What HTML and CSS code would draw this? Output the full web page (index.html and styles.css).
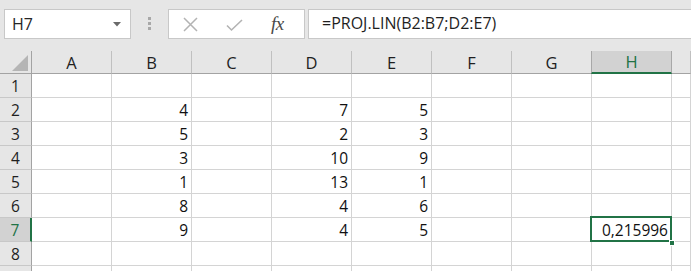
FILE: index.html
```html
<!DOCTYPE html>
<html>
<head>
<meta charset="utf-8">
<link rel="stylesheet" href="styles.css">
</head>
<body>
<div class="toolbar">
  <div class="namebox">
    <span class="nb-text">H7</span>
    <svg class="nb-arrow" width="8" height="5" viewBox="0 0 8 5"><path d="M0 0H8L4 4.5Z" fill="#6a6a6a"/></svg>
  </div>
  <div class="grip"><i></i><i></i><i></i></div>
  <div class="fbtns">
    <svg class="ic-x" width="15" height="15" viewBox="0 0 15 15"><path d="M1 1L14 14M14 1L1 14" stroke="#b3b3b3" stroke-width="1.5" fill="none"/></svg>
    <svg class="ic-check" width="17" height="13" viewBox="0 0 17 13"><path d="M1 6.5L5.5 11L16 1" stroke="#b3b3b3" stroke-width="1.6" fill="none"/></svg>
    <span class="fx">fx</span>
  </div>
  <div class="finput">=PROJ.LIN(B2:B7;D2:E7)</div>
</div>
<div class="sheet">
  <div class="row head">
    <div class="corner"><svg width="17" height="17" viewBox="0 0 17 17"><path d="M16 0V16H0Z" fill="#b5b5b5"/></svg></div>
    <div class="ch">A</div><div class="ch">B</div><div class="ch">C</div><div class="ch">D</div><div class="ch">E</div><div class="ch">F</div><div class="ch">G</div><div class="ch sel">H</div><div class="ch"></div>
  </div>
  <div class="row">
    <div class="rh">1</div><div class="c"></div><div class="c"></div><div class="c"></div><div class="c"></div><div class="c"></div><div class="c"></div><div class="c"></div><div class="c"></div><div class="c"></div>
  </div>
  <div class="row">
    <div class="rh">2</div><div class="c"></div><div class="c">4</div><div class="c"></div><div class="c">7</div><div class="c">5</div><div class="c"></div><div class="c"></div><div class="c"></div><div class="c"></div>
  </div>
  <div class="row">
    <div class="rh">3</div><div class="c"></div><div class="c">5</div><div class="c"></div><div class="c">2</div><div class="c">3</div><div class="c"></div><div class="c"></div><div class="c"></div><div class="c"></div>
  </div>
  <div class="row">
    <div class="rh">4</div><div class="c"></div><div class="c">3</div><div class="c"></div><div class="c">10</div><div class="c">9</div><div class="c"></div><div class="c"></div><div class="c"></div><div class="c"></div>
  </div>
  <div class="row">
    <div class="rh">5</div><div class="c"></div><div class="c">1</div><div class="c"></div><div class="c">13</div><div class="c">1</div><div class="c"></div><div class="c"></div><div class="c"></div><div class="c"></div>
  </div>
  <div class="row">
    <div class="rh">6</div><div class="c"></div><div class="c">8</div><div class="c"></div><div class="c">4</div><div class="c">6</div><div class="c"></div><div class="c"></div><div class="c"></div><div class="c"></div>
  </div>
  <div class="row">
    <div class="rh sel">7</div><div class="c"></div><div class="c">9</div><div class="c"></div><div class="c">4</div><div class="c">5</div><div class="c"></div><div class="c"></div><div class="c active">0,215996<span class="handle"></span></div><div class="c"></div>
  </div>
  <div class="row">
    <div class="rh">8</div><div class="c"></div><div class="c"></div><div class="c"></div><div class="c"></div><div class="c"></div><div class="c"></div><div class="c"></div><div class="c"></div><div class="c"></div>
  </div>
  <div class="row">
    <div class="rh"></div><div class="c"></div><div class="c"></div><div class="c"></div><div class="c"></div><div class="c"></div><div class="c"></div><div class="c"></div><div class="c"></div><div class="c"></div>
  </div>
</div>
</body>
</html>
```

FILE: styles.css
```css
* { box-sizing: border-box; }
html, body { margin: 0; padding: 0; }
body {
  width: 691px;
  height: 271px;
  overflow: hidden;
  background: #e6e6e6;
  font-family: "Open Sans", "Noto Sans", sans-serif;
  color: #1f1f1f;
}
.toolbar {
  height: 51px;
  display: flex;
  align-items: flex-start;
  padding: 9px 0 0 4px;
  background: #e6e6e6;
}
.namebox {
  width: 127px;
  height: 30px;
  background: #fff;
  border: 1px solid #c8c8c8;
  display: flex;
  align-items: center;
  padding: 0 0 0 7px;
  position: relative;
}
.nb-text { font-size: 16px; color: #262626; line-height: 20px; }
.nb-arrow { margin-left: auto; margin-right: 9px; margin-top: 1px; }
.grip {
  margin-left: 17px;
  margin-top: 8px;
  width: 3px;
  display: flex;
  flex-direction: column;
  gap: 2px;
}
.grip i { display: block; width: 3px; height: 3px; background: #a8a8a8; }
.fbtns {
  margin-left: 17px;
  width: 137px;
  height: 30px;
  background: #fff;
  border: 1px solid #c8c8c8;
  display: flex;
  align-items: center;
  padding-left: 14px;
}
.ic-x { margin-top: 1px; }
.ic-check { margin-left: 28px; margin-top: 3px; }
.fx {
  margin-left: 28px;
  font-family: "Liberation Serif", "DejaVu Serif", serif;
  font-style: italic;
  font-size: 19px;
  color: #4a4a4a;
  line-height: 20px;
  letter-spacing: -0.5px;
}
.finput {
  margin-left: 3px;
  flex: 1;
  height: 30px;
  background: #fff;
  border: 1px solid #c8c8c8;
  border-right: none;
  padding-left: 13px;
  font-size: 16px;
  line-height: 27px;
  color: #1f1f1f;
  white-space: nowrap;
}
.sheet {
  height: 220px;
  overflow: hidden;
  background: #fff;
}
.row {
  display: grid;
  grid-template-columns: 32px repeat(8, 80px) 1fr;
  height: 24px;
}
.row.head { height: 23px; }
.c {
  border-right: 1px solid #d4d4d4;
  border-bottom: 1px solid #d4d4d4;
  display: flex;
  align-items: flex-end;
  justify-content: flex-end;
  padding: 0 3px 1px 0;
  font-size: 15.5px;
  line-height: 20px;
  color: #111;
  position: relative;
}
.rh {
  background: #e6e6e6;
  border-right: 1px solid #a3a3a3;
  border-bottom: 1px solid #c8c8c8;
  display: flex;
  align-items: flex-end;
  justify-content: center;
  padding-bottom: 1px;
  font-size: 15.5px;
  line-height: 20px;
  color: #1f1f1f;
}
.rh.sel {
  background: #d2d2d2;
  color: #217346;
  border-right: 2px solid #217346;
}
.ch {
  background: #e6e6e6;
  border-right: 1px solid #c0c0c0;
  border-bottom: 1px solid #a3a3a3;
  display: flex;
  align-items: flex-end;
  justify-content: center;
  font-size: 16.5px;
  line-height: 21px;
  color: #1f1f1f;
}
.ch.sel {
  background: #d2d2d2;
  color: #217346;
  border-left: 1px solid #a8a8a8;
  border-right: 1px solid #a8a8a8;
  border-bottom: 2px solid #217346;
  margin-left: -1px;
}
.corner {
  background: #e6e6e6;
  border-right: 1px solid #a3a3a3;
  border-bottom: 1px solid #a3a3a3;
  display: flex;
  align-items: flex-end;
  justify-content: flex-end;
  padding: 0 2px 1px 0;
}
.c.active::after {
  content: "";
  position: absolute;
  left: -2px;
  top: -2px;
  right: -1px;
  bottom: -1px;
  border: 2px solid #217346;
}
.handle {
  position: absolute;
  right: -4px;
  bottom: -5px;
  width: 6px;
  height: 6px;
  background: #217346;
  border: 1px solid #fff;
  z-index: 2;
}
```
